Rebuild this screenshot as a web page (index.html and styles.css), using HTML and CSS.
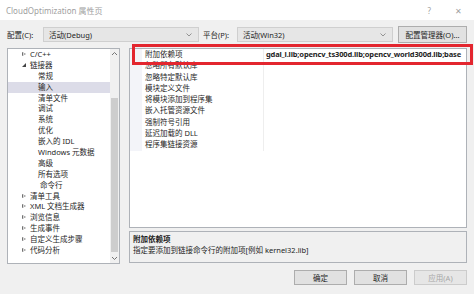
FILE: index.html
```
<!DOCTYPE html>
<html lang="zh">
<head>
    <meta charset="UTF-8">
    <title>CloudOptimization 属性页</title>
    <link rel="stylesheet" href="styles.css">
</head>
<body>
    <div class="dialog">
        <div class="titlebar">
            <span class="title">CloudOptimization 属性页</span>
            <span class="caption-btns"><span>?</span><span class="close">✕</span></span>
        </div>

        <div class="config">
            <span class="label">配置(C):</span>
            <div class="combo">
                <span>活动(Debug)</span>
                <svg class="chev" width="6" height="4" viewBox="0 0 6 4"><polyline points="0.5,0.5 3,3 5.5,0.5" fill="none" stroke="#888" stroke-width="0.9"/></svg>
            </div>
            <span class="label platform">平台(P):</span>
            <div class="combo">
                <span>活动(Win32)</span>
                <svg class="chev" width="6" height="4" viewBox="0 0 6 4"><polyline points="0.5,0.5 3,3 5.5,0.5" fill="none" stroke="#888" stroke-width="0.9"/></svg>
            </div>
            <button class="btn manager">配置管理器(O)...</button>
        </div>

        <div class="main">
            <div class="tree">
                <div class="tree-items">
                    <div class="node"><i class="exp"></i>C/C++</div>
                    <div class="node"><i class="exp open"></i>链接器</div>
                    <div class="node child">常规</div>
                    <div class="node child selected">输入</div>
                    <div class="node child">清单文件</div>
                    <div class="node child">调试</div>
                    <div class="node child">系统</div>
                    <div class="node child">优化</div>
                    <div class="node child">嵌入的 IDL</div>
                    <div class="node child">Windows 元数据</div>
                    <div class="node child">高级</div>
                    <div class="node child">所有选项</div>
                    <div class="node child cmd">命令行</div>
                    <div class="node"><i class="exp"></i>清单工具</div>
                    <div class="node"><i class="exp"></i>XML 文档生成器</div>
                    <div class="node"><i class="exp"></i>浏览信息</div>
                    <div class="node"><i class="exp"></i>生成事件</div>
                    <div class="node"><i class="exp"></i>自定义生成步骤</div>
                    <div class="node"><i class="exp"></i>代码分析</div>
                </div>
                <div class="vscroll">
                    <svg width="7" height="9" viewBox="0 0 7 9"><polyline points="1,6 3.5,3.5 6,6" fill="none" stroke="#666" stroke-width="0.9"/></svg>
                    <div class="track"><div class="thumb"></div></div>
                    <svg width="7" height="9" viewBox="0 0 7 9"><polyline points="1,3 3.5,5.5 6,3" fill="none" stroke="#666" stroke-width="0.9"/></svg>
                </div>
            </div>

            <div class="right">
                <div class="grid">
                    <div class="row"><span class="name">附加依赖项</span><span class="value">gdal_i.lib;opencv_ts300d.lib;opencv_world300d.lib;base</span></div>
                    <div class="row"><span class="name">忽略所有默认库</span><span class="value"></span></div>
                    <div class="row"><span class="name">忽略特定默认库</span><span class="value"></span></div>
                    <div class="row"><span class="name">模块定义文件</span><span class="value"></span></div>
                    <div class="row"><span class="name">将模块添加到程序集</span><span class="value"></span></div>
                    <div class="row"><span class="name">嵌入托管资源文件</span><span class="value"></span></div>
                    <div class="row"><span class="name">强制符号引用</span><span class="value"></span></div>
                    <div class="row"><span class="name">延迟加载的 DLL</span><span class="value"></span></div>
                    <div class="row"><span class="name">程序集链接资源</span><span class="value"></span></div>
                    <div class="highlight"></div>
                </div>
                <div class="desc">
                    <div class="desc-title">附加依赖项</div>
                    <div>指定要添加到链接命令行的附加项[例如 kernel32.lib]</div>
                </div>
            </div>
        </div>

        <div class="footer">
            <button class="btn">确定</button>
            <button class="btn">取消</button>
            <button class="btn disabled">应用(A)</button>
        </div>
    </div>
</body>
</html>
```

FILE: styles.css
```
* {
    box-sizing: border-box;
}
body {
    margin: 0;
    width: 474px;
    height: 294px;
    overflow: hidden;
    background: #f0f0f0;
    font-family: "Noto Sans", "Noto Sans CJK SC", sans-serif;
    font-size: 7.5px;
    color: #1e1e1e;
}
.dialog {
    display: flex;
    flex-direction: column;
    height: 294px;
}
.titlebar {
    height: 20px;
    background: #fff;
    display: flex;
    align-items: center;
    justify-content: space-between;
    padding: 0 12px 0 6px;
    color: #a0a0a0;
    font-size: 8px;
}
.caption-btns {
    display: flex;
    gap: 24px;
    font-size: 8px;
}
.config {
    display: flex;
    align-items: center;
    height: 15px;
    margin-top: 7px;
    padding: 0 7px;
}
.label {
    width: 36px;
}
.label.platform {
    width: 34px;
    margin-left: 4px;
}
.combo {
    width: 156px;
    height: 15px;
    display: flex;
    align-items: center;
    justify-content: space-between;
    padding: 0 6px 0 5px;
    background: #e6e6e6;
    border: 1px solid #cfcfcf;
}
.btn {
    font: inherit;
    color: #1e1e1e;
    background: #e1e1e1;
    border: 1px solid #adadad;
    height: 15px;
    width: 53px;
    padding: 0;
}
.btn.manager {
    width: 69px;
    height: 17px;
    margin-left: 5px;
}
.btn.disabled {
    color: #a6a6a6;
    border-color: #cccccc;
    background: #e6e6e6;
}
.main {
    display: flex;
    gap: 9px;
    margin-top: 6px;
    padding-left: 7px;
    height: 216px;
}
.tree {
    width: 113px;
    background: #fff;
    border: 1px solid #aeb2b8;
    display: flex;
}
.tree-items {
    flex: 1;
}
.node {
    height: 10.9px;
    line-height: 10.9px;
    display: flex;
    align-items: center;
    padding-left: 14px;
    white-space: nowrap;
}
.node.child {
    padding-left: 30px;
}
.node.cmd {
    padding-left: 32px;
}
.node.selected {
    background: #dcdce8;
}
.exp {
    width: 8px;
    height: 6px;
    display: inline-block;
    position: relative;
}
.exp::before {
    content: "";
    position: absolute;
    left: 0;
    top: 0.5px;
    border-left: 4px solid #707070;
    border-top: 2.5px solid transparent;
    border-bottom: 2.5px solid transparent;
}
.exp::after {
    content: "";
    position: absolute;
    left: 1px;
    top: 1.5px;
    border-left: 2px solid #fff;
    border-top: 1.5px solid transparent;
    border-bottom: 1.5px solid transparent;
}
.exp.open::before {
    top: 1px;
    border-left: none;
    border-right: 4px solid #444;
    border-top: 4px solid transparent;
    border-bottom: none;
}
.exp.open::after {
    display: none;
}
.vscroll {
    width: 9px;
    background: #f0f0f0;
    display: flex;
    flex-direction: column;
    align-items: center;
}
.vscroll svg {
    flex: none;
}
.track {
    flex: 1;
    width: 100%;
    padding: 40px 1px 2px;
    display: flex;
}
.thumb {
    flex: 1;
    background: #cdcdcd;
}
.right {
    width: 338px;
    display: flex;
    flex-direction: column;
    gap: 3px;
}
.grid {
    position: relative;
    height: 180px;
    background: #fff;
    border: 1px solid #aeb2b8;
    padding-left: 12px;
    background-image: linear-gradient(#f3f4f9, #f3f4f9);
    background-size: 12px 102px;
    background-repeat: no-repeat;
}
.row {
    display: flex;
    height: 11.3px;
    line-height: 11.3px;
}
.name {
    width: 122px;
    padding-left: 3px;
    border-right: 1px solid #eeeeee;
    white-space: nowrap;
}
.value {
    flex: 1;
    padding-left: 2px;
    font-weight: bold;
    letter-spacing: -0.15px;
    white-space: nowrap;
    overflow: hidden;
}
.highlight {
    position: absolute;
    left: 2px;
    top: -5px;
    width: 341px;
    height: 21px;
    border: 3px solid #e3262f;
}
.desc {
    height: 32px;
    background: #f0f0f0;
    border: 1px solid #aeb2b8;
    padding: 2px 3px;
    line-height: 11px;
}
.desc-title {
    font-weight: bold;
}
.footer {
    display: flex;
    justify-content: flex-end;
    gap: 7px;
    margin-top: 6px;
    padding-right: 7px;
}
```
